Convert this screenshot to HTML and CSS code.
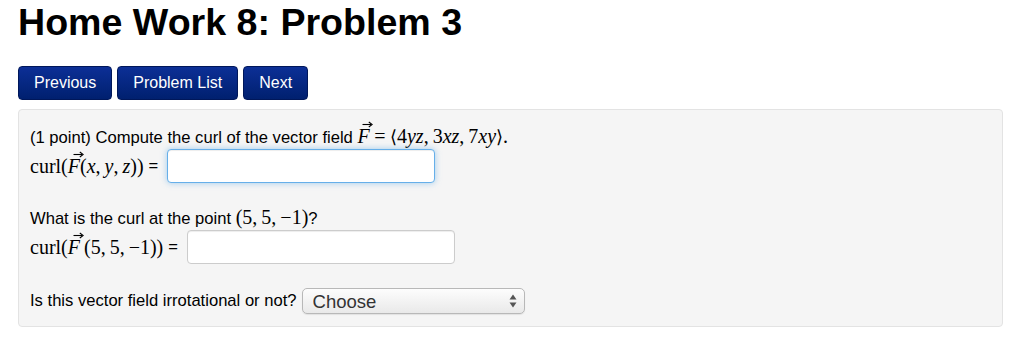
FILE: index.html
```html
<!DOCTYPE html>
<html>
<head>
<meta charset="utf-8">
<link rel="stylesheet" href="styles.css">
</head>
<body>
<div class="page">
  <h1 class="title">Home Work 8: Problem 3</h1>
  <nav class="nav">
    <a class="btn">Previous</a>
    <a class="btn">Problem List</a>
    <a class="btn">Next</a>
  </nav>
  <div class="well">
    <div class="line">(1 point) Compute the curl of the vector field <span class="math"><span class="vec"><i>F</i><svg class="arrow" width="11" height="7" viewBox="0 0 11 7"><path d="M0.5 3.5H9" stroke="#000" stroke-width="1.1" fill="none"/><path d="M6.8 1L10.2 3.5L6.8 6" stroke="#000" stroke-width="1.1" fill="none" stroke-linejoin="miter"/></svg></span><span class="rel">=</span><span class="ang">⟨</span>4<i>yz</i>,<span class="thin"></span>3<i>xz</i>,<span class="thin"></span>7<i>xy</i><span class="ang">⟩</span>.</span></div>
    <div class="row">
      <span class="math">curl(<span class="vec"><i>F</i><svg class="arrow" width="11" height="7" viewBox="0 0 11 7"><path d="M0.5 3.5H9" stroke="#000" stroke-width="1.1" fill="none"/><path d="M6.8 1L10.2 3.5L6.8 6" stroke="#000" stroke-width="1.1" fill="none"/></svg></span>(<i>x</i>,<span class="thin"></span><i>y</i>,<span class="thin"></span><i>z</i>))</span>
      <span class="eq">=</span>
      <input class="answer focused" type="text">
    </div>
    <div class="line gap">What is the curl at the point <span class="math">(5,<span class="thin"></span>5,<span class="thin"></span>−1)</span>?</div>
    <div class="row tight">
      <span class="math">curl(<span class="vec wide"><i>F</i><svg class="arrow" width="11" height="7" viewBox="0 0 11 7"><path d="M0.5 3.5H9" stroke="#000" stroke-width="1.1" fill="none"/><path d="M6.8 1L10.2 3.5L6.8 6" stroke="#000" stroke-width="1.1" fill="none"/></svg></span>(5,<span class="thin"></span>5,<span class="thin"></span>−1))</span>
      <span class="eq">=</span>
      <input class="answer" type="text">
    </div>
    <div class="row gap">
      <span>Is this vector field irrotational or not?</span>
      <span class="select-wrap">
        <select class="select"><option>Choose</option></select>
        <svg class="select-arrows" width="8" height="14" viewBox="0 0 8 14"><path d="M4 0.5L7.5 5.5H0.5Z" fill="#555"/><path d="M4 13.5L7.5 8.5H0.5Z" fill="#555"/></svg>
      </span>
    </div>
  </div>
</div>
</body>
</html>
```
FILE: styles.css
```css
html, body {
  margin: 0;
  padding: 0;
  background: #fff;
}
.page {
  padding: 2px 21px 0 18px;
  font-family: "Liberation Sans", Arial, Helvetica, sans-serif;
  color: #000;
}
.title {
  margin: 0 0 24px 0;
  font-size: 37.6px;
  line-height: 40px;
  font-weight: bold;
}
.nav {
  display: flex;
  gap: 5px;
  height: 34px;
}
.btn {
  display: flex;
  align-items: center;
  padding: 0 15px;
  border: 1px solid #00175a;
  border-radius: 4px;
  background: linear-gradient(#0c2f96, #00206f);
  color: #fff;
  font-size: 16px;
  cursor: pointer;
}
.well {
  margin-top: 9px;
  border: 1px solid #e3e3e3;
  border-radius: 4px;
  background: #f5f5f5;
  padding: 16px 11px 12px 11px;
  font-size: 16.6px;
  line-height: 22px;
}
.line {
  white-space: nowrap;
}
.row {
  display: flex;
  align-items: center;
  white-space: nowrap;
}
.gap {
  margin-top: 24px;
}
.tight {
  margin-top: 0;
}
.math {
  font-family: "Liberation Serif", "Times New Roman", "DejaVu Serif", serif;
  font-size: 20px;
  line-height: 1;
}
.math i {
  font-style: italic;
}
.rel {
  margin: 0 4.5px;
}
.thin {
  display: inline-block;
  width: 4px;
}
.ang {
  font-family: "DejaVu Serif", serif;
  font-size: 18px;
}
.vec {
  position: relative;
  display: inline-block;
}
.vec.wide {
  margin-right: 4px;
}
.arrow {
  position: absolute;
  left: 5px;
  top: -5px;
}
.eq {
  margin: 0 9px 0 5px;
  font-size: 16.6px;
}
.answer {
  box-sizing: border-box;
  width: 268px;
  height: 34px;
  margin: 0;
  border: 1px solid #cccccc;
  border-radius: 4px;
  background: #fff;
  box-shadow: inset 0 1px 1px rgba(0,0,0,0.075);
  outline: none;
}
.answer.focused {
  border-color: #66afe9;
  box-shadow: inset 0 1px 1px rgba(0,0,0,0.075), 0 0 6px rgba(102,175,233,0.6);
}
.select-wrap {
  position: relative;
  display: inline-block;
  margin-left: 5px;
}
.select {
  -webkit-appearance: none;
  appearance: none;
  box-sizing: border-box;
  width: 223px;
  height: 26px;
  margin: 0;
  padding: 0 0 0 10px;
  border: 1px solid #b8b8b8;
  border-radius: 5px;
  background: linear-gradient(#fdfdfd, #e9e9e9);
  box-shadow: 0 1px 1px rgba(0,0,0,0.08);
  color: #333;
  font-family: "Liberation Sans", Arial, Helvetica, sans-serif;
  font-size: 18.5px;
  display: block;
}
.select-arrows {
  position: absolute;
  right: 8px;
  top: 6px;
  pointer-events: none;
}
```
